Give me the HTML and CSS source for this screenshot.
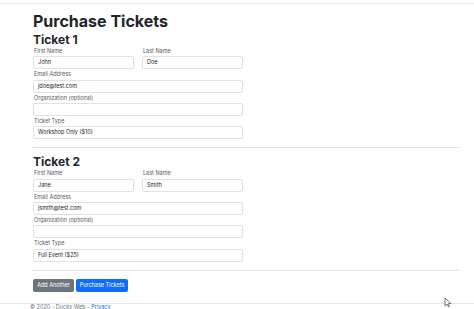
FILE: index.html
```html
<!DOCTYPE html>
<html lang="en">
<head>
<meta charset="utf-8">
<title>Purchase Tickets</title>
<link rel="stylesheet" href="styles.css">
</head>
<body>
<div class="topbar"></div>
<main class="container">
  <h1 class="title">Purchase Tickets</h1>
  <section class="ticket">
    <h2 class="ticket-title">Ticket 1</h2>
    <div class="row">
      <div class="field"><label class="lbl">First Name</label><div class="input">John</div></div>
      <div class="field"><label class="lbl">Last Name</label><div class="input">Doe</div></div>
    </div>
    <div class="field"><label class="lbl">Email Address</label><div class="input">jdoe@test.com</div></div>
    <div class="field"><label class="lbl">Organization (optional)</label><div class="input"></div></div>
    <div class="field"><label class="lbl">Ticket Type</label><div class="input">Workshop Only ($10)</div></div>
  </section>
  <hr class="sep">
  <section class="ticket">
    <h2 class="ticket-title">Ticket 2</h2>
    <div class="row">
      <div class="field"><label class="lbl">First Name</label><div class="input">Jane</div></div>
      <div class="field"><label class="lbl">Last Name</label><div class="input">Smith</div></div>
    </div>
    <div class="field"><label class="lbl">Email Address</label><div class="input">jsmith@test.com</div></div>
    <div class="field"><label class="lbl">Organization (optional)</label><div class="input"></div></div>
    <div class="field"><label class="lbl">Ticket Type</label><div class="input">Full Event ($25)</div></div>
  </section>
  <hr class="sep sep-last">
  <div class="actions">
    <button class="btn btn-gray">Add Another</button>
    <button class="btn btn-blue">Purchase Tickets</button>
  </div>
</main>
<footer class="footer">
  <div class="footer-inner">© 2020 - Ducky Web - <a class="footer-link" href="#">Privacy</a></div>
</footer>
<svg class="cursor" width="8" height="11" viewBox="0 0 8 11"><path d="M1 1 L1 9 L3 7 L4.5 10 L5.5 9.5 L4.2 6.6 L7 6.6 Z" fill="#fff" stroke="#555" stroke-width="0.8"/></svg>
</body>
</html>
```
FILE: styles.css
```css
* { box-sizing: border-box; }
html, body { margin: 0; padding: 0; }
body {
  font-family: Inter, "Noto Sans", sans-serif;
  color: #212529;
  background: #fff;
  width: 474px;
  height: 309px;
  overflow: hidden;
  position: relative;
}
.topbar {
  height: 4px;
  border-bottom: 1px solid #ececec;
  box-shadow: 0 1px 2px rgba(0,0,0,0.03);
}
.container {
  margin-left: 33px;
  width: 427px;
}
.title {
  margin: 7px 0 0 0;
  font-size: 16px;
  line-height: 20px;
  font-weight: 700;
}
.ticket-title {
  margin: 0;
  font-size: 12px;
  line-height: 15px;
  font-weight: 700;
  padding-top: 1px;
  height: 15px;
}
.ticket { width: 210px; }
.row {
  display: grid;
  grid-template-columns: 101px 101px;
  column-gap: 8px;
}
.field { display: flex; flex-direction: column; }
.lbl {
  font-size: 5.5px;
  line-height: 10.33px;
  color: #555b61;
  padding-left: 1px;
}
.input {
  height: 13px;
  border: 1px solid #dee2e6;
  border-radius: 2px;
  font-size: 5.5px;
  line-height: 11px;
  padding: 0 4px;
  color: #212529;
  white-space: nowrap;
}
.sep {
  margin: 8px 0 5px 0;
  border: 0;
  border-top: 1px solid #e4e4e4;
  height: 0;
}
.sep-last { margin-bottom: 8px; }
.actions { display: flex; gap: 2px; }
.btn {
  height: 13px;
  border: 0;
  border-radius: 2px;
  font-family: Inter, "Noto Sans", sans-serif;
  font-size: 5.5px;
  line-height: 13px;
  color: #fff;
  padding: 0;
  white-space: nowrap;
  text-align: center;
}
.btn-gray { background: #6c757d; width: 41px; }
.btn-blue { background: #0d6efd; width: 52px; }
.footer {
  margin-top: 11px;
  border-top: 1px solid #e6e6e6;
}
.footer-inner {
  margin-left: 30px;
  padding-top: 1px;
  font-size: 5.5px;
  line-height: 5.5px;
  color: #6c757d;
}
.footer-link { color: #0d6efd; text-decoration: none; }
.cursor {
  position: absolute;
  left: 444px;
  top: 297px;
}
```
